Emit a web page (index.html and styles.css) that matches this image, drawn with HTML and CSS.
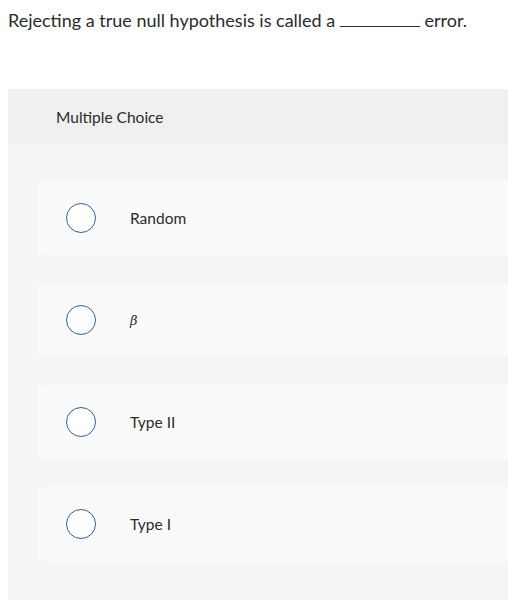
FILE: index.html
```html
<!DOCTYPE html>
<html>
<head>
<meta charset="utf-8">
<link rel="stylesheet" href="styles.css">
</head>
<body>
<p class="question">Rejecting a true null hypothesis is called a <span class="blank"></span> error.</p>
<div class="panel">
  <div class="panel-head">Multiple Choice</div>
  <div class="panel-body">
    <label class="choice"><span class="radio"></span><span class="label">Random</span></label>
    <label class="choice"><span class="radio"></span><span class="label greek">β</span></label>
    <label class="choice"><span class="radio"></span><span class="label">Type II</span></label>
    <label class="choice"><span class="radio"></span><span class="label">Type I</span></label>
  </div>
</div>
</body>
</html>
```
FILE: styles.css
```css
body {
  margin: 8px 0 0 8px;
  font-family: Lato, "Open Sans", sans-serif;
  color: #2b2b2b;
  background: #fff;
}
.question {
  margin: 0;
  font-size: 18px;
  line-height: 24px;
}
.blank {
  display: inline-block;
  width: 80px;
  border-bottom: 1px solid #333;
  vertical-align: baseline;
}
.panel {
  margin-top: 57px;
  background: #f5f5f5;
  border-radius: 2px 0 0 0;
}
.panel-head {
  background: #f0f0f0;
  height: 56px;
  padding-left: 48px;
  display: flex;
  align-items: center;
  font-size: 15.5px;
}
.panel-body {
  padding: 36px 0 40px 30px;
  display: flex;
  flex-direction: column;
  gap: 28px;
}
.choice {
  display: flex;
  align-items: center;
  height: 74px;
  background: #fafafa;
  border-radius: 3px 0 0 3px;
  padding-left: 28px;
  font-size: 15.5px;
}
.radio {
  width: 28px;
  height: 28px;
  border: 1.5px solid #2d6197;
  border-radius: 50%;
  background: #fff;
  flex: none;
}
.label {
  margin-left: 34px;
}
.greek {
  font-style: italic;
  font-family: "DejaVu Serif", serif;
  font-size: 13px;
}
```
